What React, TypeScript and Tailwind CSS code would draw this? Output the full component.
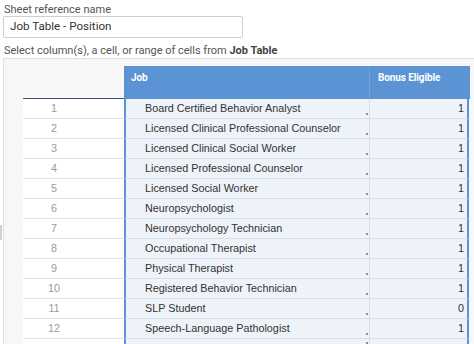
import React from "react";

const rows: { job: string; bonus: number }[] = [
  { job: "Board Certified Behavior Analyst", bonus: 1 },
  { job: "Licensed Clinical Professional Counselor", bonus: 1 },
  { job: "Licensed Clinical Social Worker", bonus: 1 },
  { job: "Licensed Professional Counselor", bonus: 1 },
  { job: "Licensed Social Worker", bonus: 1 },
  { job: "Neuropsychologist", bonus: 1 },
  { job: "Neuropsychology Technician", bonus: 1 },
  { job: "Occupational Therapist", bonus: 1 },
  { job: "Physical Therapist", bonus: 1 },
  { job: "Registered Behavior Technician", bonus: 1 },
  { job: "SLP Student", bonus: 0 },
  { job: "Speech-Language Pathologist", bonus: 1 },
];

export default function App() {
  return (
    <div className="relative w-[474px] h-[344px] overflow-hidden bg-white font-['Roboto','Liberation_Sans',sans-serif] text-[#555]">
      {/* 表单标签 */}
      <p className="pl-[4px] pt-[3px] text-[11px] leading-[13px]">
        Sheet reference name
      </p>
      <div className="ml-[3px] w-[240px] h-[22px] border border-[#cfcfcf] rounded-[2px] flex items-center pl-[6px] text-[11.6px] text-[#333]">
        Job Table - Position
      </div>
      <p className="pl-[4px] mt-[6px] text-[11px] leading-[13px]">
        Select column(s), a cell, or range of cells from{" "}
        <span className="font-bold text-[#444]">Job Table</span>
      </p>

      {/* 表格预览区域 */}
      <div className="mt-[1px] ml-[3px] border-t border-l border-[#dedede] bg-[#f7f7f7] pt-[7px] pl-[19px] h-[300px]">
        {/* 表头 */}
        <div className="flex h-[33px]">
          <div className="w-[101px] border-b border-[#4b4f72] mt-auto"></div>
          <div className="w-[346px] bg-[#5b93d4] flex items-center text-white font-bold text-[10px] tracking-[-0.1px]">
            <div className="w-[245px] pl-[7px] h-full flex items-center pb-[10px]">
              Job
            </div>
            <div className="flex-1 h-full flex items-center pl-[8px] pb-[10px] border-l border-[#6fa2dc]">
              Bonus Eligible
            </div>
          </div>
        </div>
        {/* 数据行 */}
        <div className="flex flex-col font-['Liberation_Sans',Arial,sans-serif] text-[10.8px]">
          {rows.map((item, i) => (
            <div key={item.job} className="flex h-[20px]">
              <div className="w-[101px] bg-white border-b border-[#e2e2e2] flex items-center">
                <span className="w-[62px] text-center text-[#9a9a9a] text-[10.8px]">
                  {i + 1}
                </span>
              </div>
              <div className="relative w-[245px] bg-[#eef2f9] border-l-2 border-[#5b93d4] border-b border-b-[#d8dee8] flex items-center pl-[19px] text-[#333]">
                {item.job}
                <span className="absolute right-[1px] bottom-[3px] w-[2px] h-[2px] bg-[#8a8f99]"></span>
              </div>
              <div className="w-[100px] bg-[#eef2f9] border-l border-[#d8dee8] border-b border-b-[#d8dee8] border-r-2 border-r-[#5b93d4] flex items-center justify-end pr-[3px] text-[#333]">
                {item.bonus}
              </div>
            </div>
          ))}
          {/* 下一行 (被裁切) */}
          <div className="flex h-[20px]">
            <div className="w-[101px] bg-white"></div>
            <div className="relative w-[245px] bg-[#eef2f9] border-l-2 border-[#5b93d4]">
              <span className="absolute right-[1px] top-[3px] w-[2px] h-[2px] bg-[#8a8f99]"></span>
            </div>
            <div className="w-[100px] bg-[#eef2f9] border-l border-[#d8dee8] border-r-2 border-r-[#5b93d4]"></div>
          </div>
        </div>
      </div>

      {/* 左侧拖动手柄 */}
      <div className="absolute left-0 top-[225px] w-[2px] h-[15px] bg-[#d0d0d0]"></div>
    </div>
  );
}
